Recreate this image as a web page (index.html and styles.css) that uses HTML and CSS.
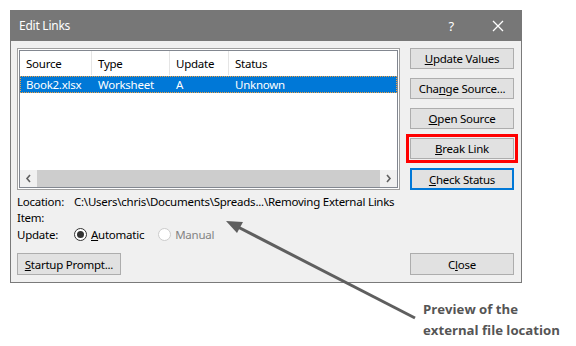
FILE: index.html
```html
<!DOCTYPE html>
<html>
<head>
<meta charset="utf-8">
<link rel="stylesheet" href="styles.css">
</head>
<body>
<div class="dialog">
  <div class="titlebar">
    <span class="title">Edit Links</span>
    <span class="tb-help">?</span>
    <svg class="tb-close" width="12" height="12" viewBox="0 0 12 12"><path d="M1 1 L11 11 M11 1 L1 11" stroke="#fff" stroke-width="1.3" fill="none"/></svg>
  </div>
  <div class="content">
    <div class="main">
      <div class="left">
        <div class="listbox">
          <div class="listinner">
            <div class="hdr">
              <div class="c c1">Source</div>
              <div class="c c2">Type</div>
              <div class="c c3">Update</div>
              <div class="c c4">Status</div>
            </div>
            <div class="row sel">
              <div class="c c1">Book2.xlsx</div>
              <div class="c c2">Worksheet</div>
              <div class="c c3">A</div>
              <div class="c c4">Unknown</div>
            </div>
            <div class="spacer"></div>
            <div class="hscroll">
              <svg class="arr" width="17" height="17" viewBox="0 0 17 17"><path d="M10 5 L7 8.5 L10 12" stroke="#606060" stroke-width="1.6" fill="none"/></svg>
              <div class="thumb"></div>
              <svg class="arr" width="17" height="17" viewBox="0 0 17 17"><path d="M7 5 L10 8.5 L7 12" stroke="#606060" stroke-width="1.6" fill="none"/></svg>
            </div>
          </div>
        </div>
        <div class="info">
          <div class="irow"><span class="lbl">Location:</span><span>C:\Users\chris\Documents\Spreads...\Removing External Links</span></div>
          <div class="irow"><span class="lbl">Item:</span></div>
          <div class="irow">
            <span class="lbl">Update:</span>
            <span class="radio on"></span><span class="rtext"><u>A</u>utomatic</span>
            <span class="radio off"></span><span class="rtext dis">Manual</span>
          </div>
        </div>
      </div>
      <div class="right">
        <div class="btn"><u>U</u>pdate Values</div>
        <div class="btn">Cha<u>n</u>ge Source...</div>
        <div class="btn"><u>O</u>pen Source</div>
        <div class="btn red"><u>B</u>reak Link</div>
        <div class="btn blue"><u>C</u>heck Status</div>
      </div>
    </div>
    <div class="bottom">
      <div class="btn"><u>S</u>tartup Prompt...</div>
      <div class="btn">C<u>l</u>ose</div>
    </div>
  </div>
</div>
<svg class="pointer" width="576" height="346" viewBox="0 0 576 346">
  <line x1="415" y1="318" x2="234" y2="225" stroke="#5f5f5f" stroke-width="3"/>
  <path d="M226 221 L243 222 L237 233 Z" fill="#5f5f5f"/>
</svg>
<div class="note">Preview of the<br>external file location</div>
</body>
</html>
```
FILE: styles.css
```css
* { box-sizing: border-box; }
body {
  margin: 0;
  width: 576px;
  height: 346px;
  background: #fff;
  font-family: "Segoe UI", "Noto Sans", "Open Sans", sans-serif;
  font-size: 11.5px;
  letter-spacing: -0.25px;
  color: #000;
  position: relative;
  overflow: hidden;
}
.dialog {
  position: absolute;
  left: 10px;
  top: 10px;
  width: 512px;
  height: 273px;
  background: #f0f0f0;
  border: 1px solid #7a7a7a;
  border-top: none;
  display: flex;
  flex-direction: column;
}
.titlebar {
  height: 31px;
  background: #777777;
  color: #fff;
  display: flex;
  align-items: center;
  padding-left: 9px;
  margin: 0 -1px;
}
.title { flex: 1; font-size: 12px; }
.tb-help { font-size: 13px; margin-right: 38px; }
.tb-close { margin-right: 18px; }
.content {
  flex: 1;
  padding: 7px 7px 7px 6px;
  display: flex;
  flex-direction: column;
}
.main { display: flex; gap: 10px; }
.left { width: 383px; }
.listbox {
  height: 142px;
  border: 1px solid #a0a0a0;
  padding: 1px;
  background: #fff;
}
.listinner {
  height: 100%;
  border: 1px solid #828790;
  display: flex;
  flex-direction: column;
}
.hdr, .row { display: flex; }
.hdr { height: 24px; align-items: center; }
.hdr .c { border-right: 1px solid #e5e5e5; height: 100%; display: flex; align-items: center; }
.c { padding-left: 6px; white-space: nowrap; }
.c1 { width: 72px; }
.c2 { width: 78px; }
.c3 { width: 59px; }
.c4 { flex: 1; border-right: none !important; }
.row { height: 17px; align-items: center; margin-top: 1px; }
.sel { background: #0078d7; color: #fff; outline: 1px dotted #f0a040; outline-offset: -1px; }
.spacer { flex: 1; }
.hscroll {
  height: 17px;
  background: #f0f0f0;
  display: flex;
  align-items: center;
}
.thumb { flex: 1; height: 17px; background: #cdcdcd; }
.arr { flex: none; }
.info { margin-top: 3px; }
.irow { height: 16.5px; display: flex; align-items: center; white-space: nowrap; }
.lbl { width: 57px; flex: none; }
.radio {
  width: 13px; height: 13px; border-radius: 50%;
  border: 1px solid #333; background: #fff;
  display: inline-flex; align-items: center; justify-content: center;
  margin-right: 4px;
}
.radio.on::after { content: ""; width: 7px; height: 7px; border-radius: 50%; background: #333; }
.radio.off { border-color: #cccccc; }
.rtext { margin-right: 14px; }
.dis { color: #838383; }
.right { display: flex; flex-direction: column; gap: 9px; width: 104px; }
.btn {
  width: 104px;
  height: 21px;
  background: #e1e1e1;
  border: 1px solid #adadad;
  display: flex;
  align-items: center;
  justify-content: center;
  white-space: nowrap;
}
.btn.red { outline: 3px solid #ff0000; outline-offset: 1px; }
.btn.blue { border: 2px solid #0078d7; height: 22px; }
.bottom {
  margin-top: auto;
  display: flex;
  justify-content: space-between;
}
.bottom .btn { height: 22px; }
.pointer { position: absolute; left: 0; top: 0; }
.note {
  position: absolute;
  left: 423px;
  top: 299px;
  font-family: "Open Sans", sans-serif;
  font-weight: 700;
  font-size: 13.2px;
  letter-spacing: 0;
  line-height: 21px;
  color: #555;
}
```
